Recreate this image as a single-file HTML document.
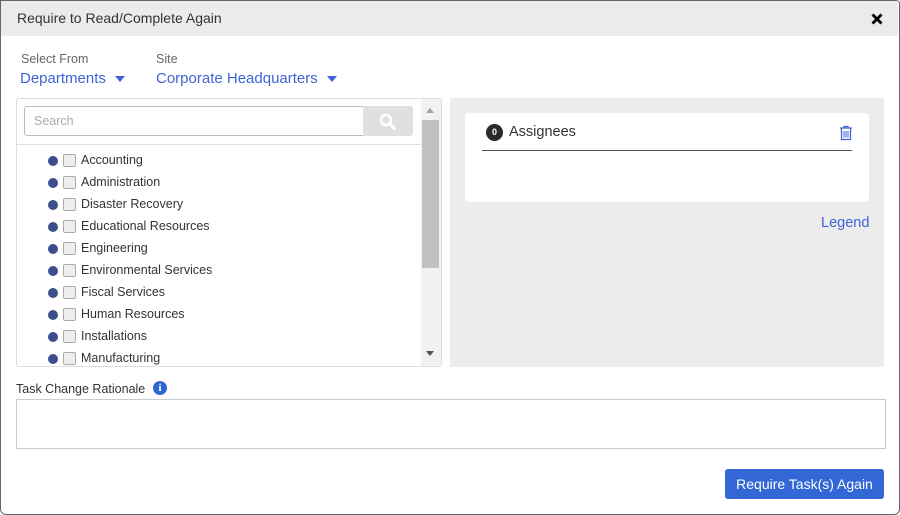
<!DOCTYPE html>
<html><head><meta charset="utf-8"><style>
*{box-sizing:border-box;margin:0;padding:0}
body{width:900px;height:515px;background:#fff;font-family:"Liberation Sans",sans-serif;position:relative;overflow:hidden;color:#333}
.a{position:absolute}
.dlg{left:0;top:0;width:900px;height:515px;border:1px solid #666;border-radius:0 4px 6px 6px;background:#fff}
.hdr{left:1px;top:1px;width:897px;height:35px;background:#ebebeb}
.it{position:absolute;left:0;width:400px;height:22px;font-size:12.5px;color:#333}
.it .d{position:absolute;left:31px;top:3px;width:10px;height:10px;border-radius:50%;background:#3d4f8a}
.it .c{position:absolute;left:46px;top:1px;width:13px;height:13px;border:1px solid #aaa;border-radius:2px;background:#eee}
.it span{position:absolute;left:64px;top:0px;white-space:nowrap}
.lnk{color:#3f63d8;font-size:15px}
.car{display:inline-block;width:0;height:0;border-left:5px solid transparent;border-right:5px solid transparent;border-top:6px solid #3f63d8;margin-left:9px;vertical-align:middle}
</style></head><body>
<div class="a dlg"></div>
<div class="a hdr"></div>
<div class="a" style="left:17px;top:10px;font-size:14px;color:#333">Require to Read/Complete Again</div>
<svg class="a" style="left:871px;top:13px" width="12" height="12" viewBox="0 0 12 12"><path d="M1.5 1.5L10.5 10.5M10.5 1.5L1.5 10.5" stroke="#000" stroke-width="2.8"/></svg>
<div class="a" style="left:21px;top:52px;font-size:12.5px;color:#666">Select From</div>
<div class="a lnk" style="left:20px;top:70px">Departments<span class="car"></span></div>
<div class="a" style="left:156px;top:52px;font-size:12.5px;color:#666">Site</div>
<div class="a lnk" style="left:156px;top:70px">Corporate Headquarters<span class="car"></span></div>

<div class="a" style="left:16px;top:98px;width:426px;height:269px;border:1px solid #ddd;border-radius:3px;overflow:hidden">
  <div class="a" style="left:7px;top:7px;width:340px;height:30px;border:1px solid #bbb;border-radius:3px 0 0 3px;font-size:12.5px;color:#aaa;padding:7px 9px">Search</div>
  <div class="a" style="left:346px;top:7px;width:50px;height:30px;background:#e0e0e0;border-radius:0 3px 3px 0"></div>
  <svg class="a" style="left:362px;top:14px" width="18" height="18" viewBox="0 0 18 18"><circle cx="7" cy="7" r="5" fill="none" stroke="#fff" stroke-width="2.5"/><path d="M11 11L15.5 15.5" stroke="#fff" stroke-width="3" stroke-linecap="round"/></svg>
  <div class="a" style="left:0;top:45px;width:405px;height:1px;background:#ddd"></div>
  <div class="a" style="left:404px;top:0;width:21px;height:269px;background:#f1f1f1"></div>
  <div class="a" style="left:405px;top:21px;width:17px;height:148px;background:#c1c1c1"></div>
  <div class="a" style="left:409px;top:9px;border-left:4px solid transparent;border-right:4px solid transparent;border-bottom:5px solid #a3a3a3"></div>
  <div class="a" style="left:409px;top:252px;border-left:4px solid transparent;border-right:4px solid transparent;border-top:5px solid #505050"></div>
  <div class="it" style="top:54px"><i class="d"></i><i class="c"></i><span>Accounting</span></div>
  <div class="it" style="top:76px"><i class="d"></i><i class="c"></i><span>Administration</span></div>
  <div class="it" style="top:98px"><i class="d"></i><i class="c"></i><span>Disaster Recovery</span></div>
  <div class="it" style="top:120px"><i class="d"></i><i class="c"></i><span>Educational Resources</span></div>
  <div class="it" style="top:142px"><i class="d"></i><i class="c"></i><span>Engineering</span></div>
  <div class="it" style="top:164px"><i class="d"></i><i class="c"></i><span>Environmental Services</span></div>
  <div class="it" style="top:186px"><i class="d"></i><i class="c"></i><span>Fiscal Services</span></div>
  <div class="it" style="top:208px"><i class="d"></i><i class="c"></i><span>Human Resources</span></div>
  <div class="it" style="top:230px"><i class="d"></i><i class="c"></i><span>Installations</span></div>
  <div class="it" style="top:252px"><i class="d"></i><i class="c"></i><span>Manufacturing</span></div>
</div>

<div class="a" style="left:450px;top:98px;width:434px;height:269px;background:#ececec"></div>
<div class="a" style="left:465px;top:113px;width:404px;height:89px;background:#fff;border-radius:4px"></div>
<div class="a" style="left:486px;top:124px;width:17px;height:17px;border-radius:50%;background:#2b2b2b;color:#fff;font-size:9px;font-weight:bold;text-align:center;line-height:17px">0</div>
<div class="a" style="left:509px;top:124px;font-size:14.5px;color:#333">Assignees</div>
<div class="a" style="left:482px;top:150px;width:370px;height:1px;background:#555"></div>
<svg class="a" style="left:839px;top:125px" width="14" height="16" viewBox="0 0 14 16"><path d="M1 3H13M5 3V1.5H9V3M2.5 3.5V14.5H11.5V3.5" fill="none" stroke="#3f63d8" stroke-width="1.3"/><path d="M5 6V12.5M7 6V12.5M9 6V12.5" stroke="#3f63d8" stroke-width="1"/></svg>
<div class="a lnk" style="left:821px;top:215px;font-size:14.5px">Legend</div>

<div class="a" style="left:16px;top:382px;font-size:12.5px;color:#333">Task Change Rationale</div>
<div class="a" style="left:153px;top:381px;width:14px;height:14px;border-radius:50%;background:#2f66d0;color:#fff;font-size:11px;font-weight:bold;text-align:center;line-height:14px;font-family:'Liberation Serif',serif">i</div>
<div class="a" style="left:16px;top:399px;width:870px;height:50px;border:1px solid #ccc"></div>
<div class="a" style="left:725px;top:469px;width:159px;height:30px;background:#3367d6;border-radius:3px;color:#fff;font-size:14px;text-align:center;line-height:30px">Require Task(s) Again</div>
</body></html>
